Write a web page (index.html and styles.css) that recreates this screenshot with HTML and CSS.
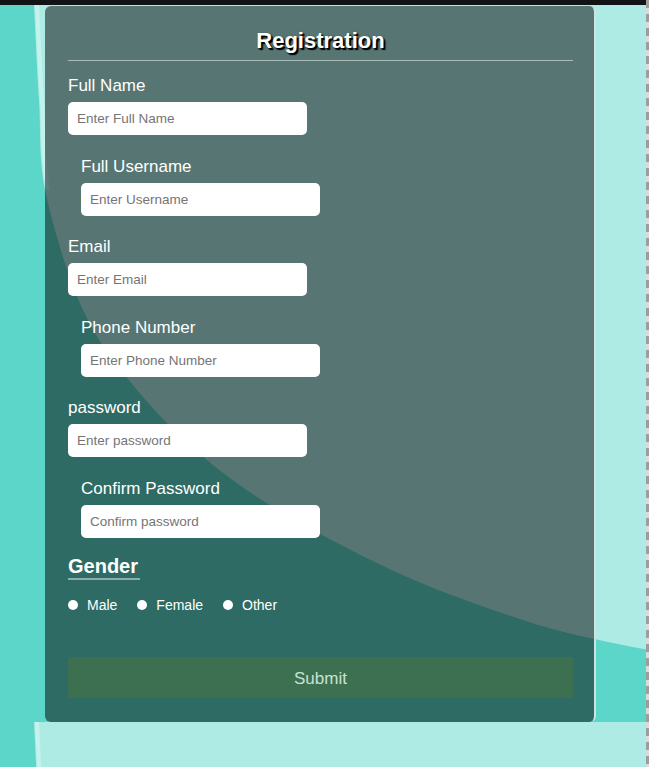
FILE: index.html
```html
<!DOCTYPE html>
<html lang="en">
<head>
<meta charset="utf-8">
<title>Registration</title>
<link rel="stylesheet" href="styles.css">
</head>
<body>
  <div class="card">
    <h1 class="title">Registration</h1>
    <hr class="rule">
    <form class="form">
      <div class="fields">
        <div class="field">
          <label class="label">Full Name</label>
          <input class="input" type="text" placeholder="Enter Full Name">
        </div>
        <div class="field field-indent">
          <label class="label">Full Username</label>
          <input class="input" type="text" placeholder="Enter Username">
        </div>
        <div class="field">
          <label class="label">Email</label>
          <input class="input" type="text" placeholder="Enter Email">
        </div>
        <div class="field field-indent">
          <label class="label">Phone Number</label>
          <input class="input" type="text" placeholder="Enter Phone Number">
        </div>
        <div class="field">
          <label class="label">password</label>
          <input class="input" type="text" placeholder="Enter password">
        </div>
        <div class="field field-indent">
          <label class="label">Confirm Password</label>
          <input class="input" type="text" placeholder="Confirm password">
        </div>
      </div>
      <div class="gender">
        <div class="gender-title">Gender</div>
        <div class="options">
          <label class="option"><input class="radio" type="radio" name="g"><span>Male</span></label>
          <label class="option"><input class="radio" type="radio" name="g"><span>Female</span></label>
          <label class="option"><input class="radio" type="radio" name="g"><span>Other</span></label>
        </div>
      </div>
      <button class="submit" type="button">Submit</button>
    </form>
  </div>
</body>
</html>
```
FILE: styles.css
```css
html {
  margin: 0;
  height: 767px;
  overflow: hidden;
  background:
    repeating-linear-gradient(to bottom, #9d9d9d 0 8px, #dadada 8px 14px) right top / 3px 100% no-repeat,
    #111315;
}

body {
  margin: 5px 3px 0 0;
  height: 762px;
  font-family: "Liberation Sans", Arial, sans-serif;
  background-color: #5cd6c8;
  background-image: url("data:image/svg+xml,%3Csvg xmlns='http://www.w3.org/2000/svg' width='649' height='717' viewBox='0 0 649 717'%3E%3Crect width='649' height='717' fill='%235cd6c8'/%3E%3Cpath d='M34 0 C34.8 15.8 37 64.2 39 95 C41 125.8 38.5 150 45 185 C52.5 220 67.7 271.7 83 305 C98.3 338.3 116.3 360 137 385 C157.7 410 181.5 433.8 207 455 C232.5 476.2 255.5 492 290 512 C324.5 532 372.7 557.3 414 575 C455.3 592.7 498.8 606.8 538 620 C577.2 631.2 612 638 649 645 L649 0 Z' fill='%23aeebe4'/%3E%3Cpath d='M34 0 C34.8 15.8 37 64.2 39 95 C41 125.8 38.5 150 45 185' fill='none' stroke='%23c4f3ee' stroke-width='4' transform='translate(3 0)'/%3E%3C/svg%3E");
  background-size: 649px 717px;
  background-repeat: repeat-y;
  background-position: 0 0;
}

.card {
  box-sizing: border-box;
  width: 551px;
  height: 716px;
  margin: 1px 0 0 45px;
  padding: 22px 21px 0 23px;
  background: rgba(0, 0, 0, 0.5);
  border-radius: 6px;
  border-right: 2px solid #cfe3e0;
  color: #ffffff;
}

.title {
  margin: 0;
  font-size: 22px;
  line-height: 26px;
  font-weight: bold;
  text-align: center;
  color: #ffffff;
  text-shadow: 2px 2px 1px #000000, 1px 1px 2px #1a1a1a;
}

.rule {
  margin: 6px 0 0;
  border: 0;
  height: 1px;
  background: #a9bbb8;
}

.form {
  margin: 15px 0 0;
  display: flex;
  flex-direction: column;
}

.fields {
  display: flex;
  flex-direction: column;
  gap: 21.6px;
}

.field {
  display: flex;
  flex-direction: column;
  align-items: flex-start;
  gap: 6px;
}

.field-indent {
  margin-left: 13px;
}

.label {
  font-size: 17px;
  line-height: 20px;
  color: #ffffff;
}

.input {
  box-sizing: border-box;
  width: 239px;
  height: 33px;
  margin: 0;
  padding: 0 8px 0 9px;
  border: none;
  border-radius: 5px;
  background: #ffffff;
  font-family: "Liberation Sans", Arial, sans-serif;
  font-size: 13.5px;
  color: #333;
  outline: none;
}

.input::placeholder {
  color: #757575;
}

.gender {
  margin-top: 17px;
  display: flex;
  flex-direction: column;
  align-items: flex-start;
}

.gender-title {
  font-size: 20px;
  font-weight: bold;
  line-height: 23px;
  padding-right: 2px;
  color: #ffffff;
  border-bottom: 2px solid rgba(255, 255, 255, 0.45);
}

.options {
  margin-top: 17px;
  display: flex;
  align-items: center;
  height: 16px;
}

.option {
  display: flex;
  align-items: center;
  margin-right: 20px;
  font-size: 14px;
  line-height: 16px;
  color: #ffffff;
}

.radio {
  appearance: none;
  -webkit-appearance: none;
  width: 10px;
  height: 10px;
  margin: 0 9px 0 0;
  border-radius: 50%;
  background: #ffffff;
  border: none;
}

.submit {
  margin-top: 44px;
  width: 100%;
  height: 41px;
  padding: 3px 0 0;
  border: none;
  border-radius: 0;
  background: #3c7050;
  color: #c8e3d3;
  font-family: "Liberation Sans", Arial, sans-serif;
  font-size: 17px;
}
```
